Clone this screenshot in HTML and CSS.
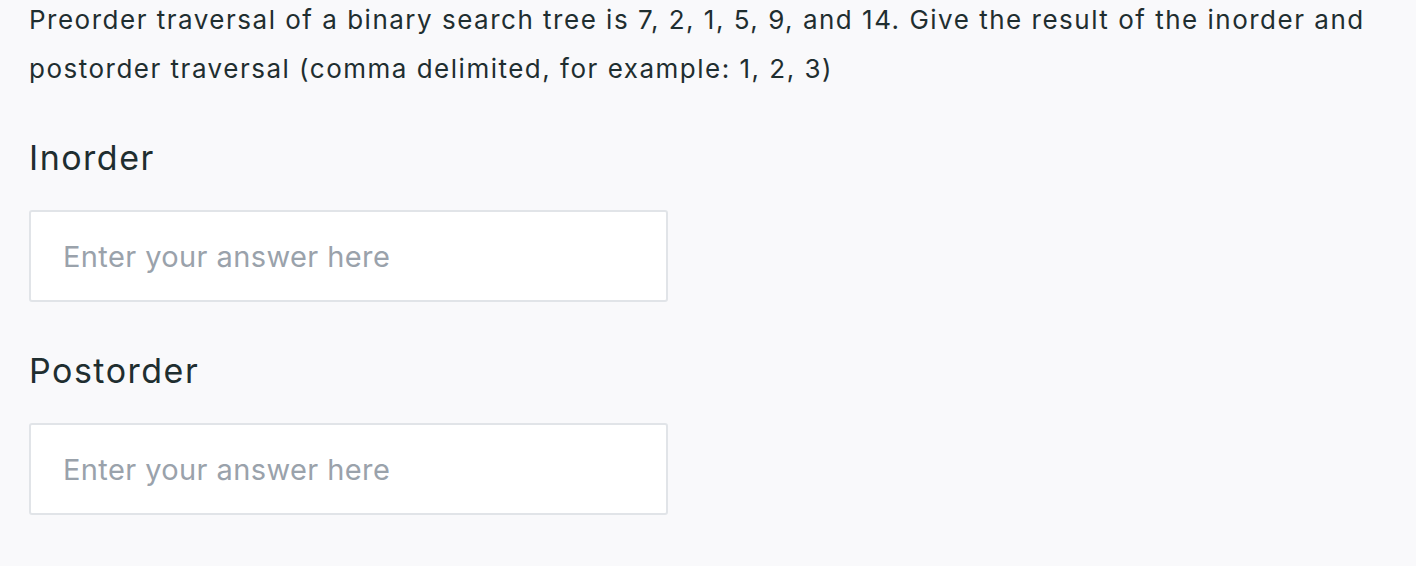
FILE: index.html
```html
<!DOCTYPE html>
<html lang="en">
<head>
<meta charset="utf-8">
<title>Traversal question</title>
<link rel="stylesheet" href="styles.css">
</head>
<body>
<main class="question">
  <p class="prompt">Preorder traversal of a binary search tree is 7, 2, 1, 5, 9, and 14. Give the result of the inorder and postorder traversal (comma delimited, for example: 1, 2, 3)</p>
  <section class="field">
    <label class="field-label" for="inorder">Inorder</label>
    <input class="field-input" id="inorder" type="text" placeholder="Enter your answer here">
  </section>
  <section class="field field-second">
    <label class="field-label" for="postorder">Postorder</label>
    <input class="field-input" id="postorder" type="text" placeholder="Enter your answer here">
  </section>
</main>
</body>
</html>
```

FILE: styles.css
```css
html, body {
  margin: 0;
  padding: 0;
  background: #f9f9fb;
}
body {
  font-family: "Inter", "Liberation Sans", sans-serif;
  color: #1f2e30;
}
.question {
  padding: 0 29px;
  display: flex;
  flex-direction: column;
}
.prompt {
  margin: 0;
  font-size: 26px;
  line-height: 49px;
  letter-spacing: 1.5px;
  max-width: 1345px;
  margin-top: -5px;
}
.field {
  display: flex;
  flex-direction: column;
}
.field-label {
  font-size: 34px;
  line-height: 44px;
  letter-spacing: 1.5px;
  margin-top: 43px;
  margin-bottom: 30px;
}
.field-second .field-label {
  margin-top: 47px;
}
.field-input {
  box-sizing: border-box;
  width: 639px;
  height: 92px;
  border: 2px solid #e1e4e8;
  border-radius: 3px;
  background: #ffffff;
  padding: 0 32px;
  font-family: inherit;
  font-size: 29px;
  letter-spacing: 0.4px;
  color: #1f2e30;
  outline: none;
}
.field-input::placeholder {
  color: #9aa2ab;
}
```
